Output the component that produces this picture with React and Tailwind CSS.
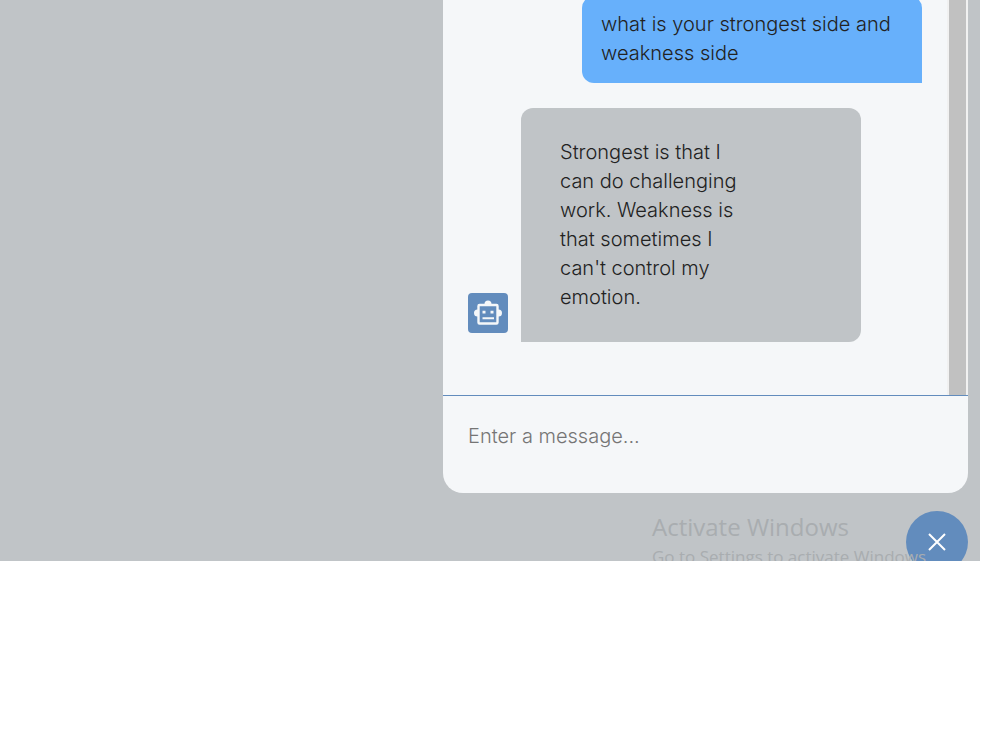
import { useState } from "react";

const BotIcon = () => (
    <svg viewBox="0 0 40 40" className="size-10" aria-hidden="true">
        <path
            d="M16.500 12v-1a3.500 3.500 0 0 1 7 0V12M10.500 16.500h-1a3.500 3.500 0 0 0 0 7h1M29.500 16.500h1a3.500 3.500 0 0 1 0 7h-1"
            fill="currentColor"
        />
        <rect x="10.500" y="12" width="19" height="18.500" rx="1" fill="none" stroke="currentColor" strokeWidth="2.400" />
        <path d="M14.500 17.800h3v2.800h-3zM22.500 17.800h3v2.800h-3zM14.500 24.200h11.500v2h-11.500z" fill="currentColor" />
    </svg>
);

const CloseIcon = () => (
    <svg viewBox="0 0 20 20" className="size-5" fill="none" stroke="currentColor" strokeWidth="2" aria-hidden="true">
        <path d="M2 2l16 16M18 2L2 18" />
    </svg>
);

const UserMessage = ({ children }) => (
    <div className="flex justify-end">
        <p className="w-85 rounded-xl rounded-br-none bg-[#67b0fb] px-[19px] pt-3.5 pb-[15px]">{children}</p>
    </div>
);

const BotMessage = ({ children }) => (
    <div className="flex items-end">
        <span className="mr-[13px] mb-[9px] rounded bg-[#628cbd] text-[#f5f7f9]">
            <BotIcon />
        </span>
        <p className="w-85 rounded-xl rounded-bl-none bg-[#c0c4c7] py-[30px] pr-[110px] pl-[39px]">{children}</p>
    </div>
);

const ChatWindow = () => {
    const [text, setText] = useState("");

    return (
        <section className="mr-3 ml-auto max-w-[525px] overflow-hidden rounded-b-[20px] bg-[#f5f7f9]">
            <div className="flex border-b border-[#628cbd]">
                <div className="-mt-1 flex flex-1 flex-col gap-[25px] pr-[25px] pb-[53px] pl-[25px]">
                    <UserMessage>what is your strongest side and weakness side</UserMessage>
                    <BotMessage>
                        Strongest is that I can do challenging work. Weakness is that sometimes I can't control my emotion.
                    </BotMessage>
                </div>
                {/* scrollbar */}
                <div className="w-[21px] bg-[#f1f1f1] px-0.5">
                    <div className="h-full bg-[#c1c1c1]" />
                </div>
            </div>
            <form onSubmit={(e) => e.preventDefault()}>
                <input
                    aria-label="Message"
                    value={text}
                    onChange={(e) => setText(e.target.value)}
                    placeholder="Enter a message..."
                    className="block w-full px-[25px] pt-[26px] pb-[42px] placeholder:text-[#757575] focus:outline-none"
                />
            </form>
        </section>
    );
};

const App = () => {
    const [open, setOpen] = useState(true);

    return (
        <main className="mr-5 bg-[#c0c4c7] font-['Inter',sans-serif] text-[20px] leading-[29px] font-light text-[#222]">
            {open && <ChatWindow />}
            <div className="relative flex h-17 justify-end overflow-hidden pt-[18px] pr-3">
                <button
                    aria-label="Toggle chat"
                    onClick={() => setOpen(!open)}
                    className="flex size-[62px] shrink-0 items-center justify-center rounded-full bg-[#628cbd] text-white"
                >
                    <CloseIcon />
                </button>
                <div className="pointer-events-none absolute top-[18px] right-12 w-70 font-['Open_Sans',sans-serif] font-normal whitespace-nowrap text-[#a9adb0]">
                    <p className="text-2xl leading-8">Activate Windows</p>
                    <p className="text-[17px] leading-7">Go to Settings to activate Windows.</p>
                </div>
            </div>
        </main>
    );
};

export default App;
